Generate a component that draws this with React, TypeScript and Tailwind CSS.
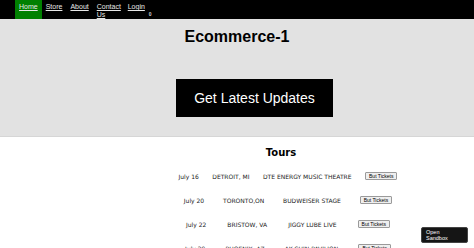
import React from 'react';

const tours = [
  { date: 'July 16', city: 'DETROIT, MI', venue: 'DTE ENERGY MUSIC THEATRE' },
  { date: 'July 20', city: 'TORONTO,ON', venue: 'BUDWEISER STAGE' },
  { date: 'July 22', city: 'BRISTOW, VA', venue: 'JIGGY LUBE LIVE' },
  { date: 'July 29', city: 'PHOENIX, AZ', venue: 'AK-CHIN PAVILION' },
];

function Nav() {
  return (
    <nav className="flex h-[19px] bg-black pl-[15px] text-[7px] leading-[8px] text-[#e8e8e8] [font-family:'Liberation_Sans',sans-serif]">
      <a href="#" className="bg-[#008000] px-[4px] pt-[3px] underline">Home</a>
      <a href="#" className="px-[4px] pt-[3px] underline">Store</a>
      <a href="#" className="px-[4px] pt-[3px] underline">About</a>
      <a href="#" className="w-[31px] px-[4px] pt-[3px] underline">Contact Us</a>
      <a href="#" className="px-[4px] pt-[3px] underline">Login</a>
      <span className="mt-[10px] text-[5px] font-bold text-[#cfcfcf]">0</span>
    </nav>
  );
}

function Header() {
  return (
    <header className="flex h-[118px] flex-col items-center border-b border-[#d6d6d6] bg-[#e2e2e2] pt-[9px] [font-family:'Liberation_Sans',sans-serif]">
      <h1 className="text-[16px] font-bold leading-[18px] text-black">Ecommerce-1</h1>
      <button className="mt-[33px] ml-[35px] h-[38px] w-[157px] bg-black text-[14px] text-white">
        Get Latest Updates
      </button>
    </header>
  );
}

function Tours() {
  return (
    <section className="ml-[165px] w-[246px] pt-[10px] [font-family:'DejaVu_Sans',sans-serif]">
      <h2 className="pr-[14px] text-center text-[10px] font-bold leading-[12px] text-black">Tours</h2>
      <div className="mt-[5px]">
        {tours.map((t) => (
          <div key={t.date} className="flex h-[24px] items-center justify-evenly text-[6px] text-[#222]">
            <span>{t.date}</span>
            <span>{t.city}</span>
            <span>{t.venue}</span>
            <button className="h-[8px] rounded-[1px] border border-[#9a9a9a] bg-[#efefef] px-[3px] text-[5px] leading-[6px] text-black [font-family:'Liberation_Sans',sans-serif]">
              But Tickets
            </button>
          </div>
        ))}
      </div>
    </section>
  );
}

export default function App() {
  return (
    <div className="h-[248px] overflow-hidden bg-white">
      <Nav />
      <Header />
      <Tours />
      <button className="fixed right-[6px] bottom-[5px] h-[16px] w-[47px] rounded-[2px] border border-[#444] bg-[#151515] pl-[4px] text-left text-[5.5px] leading-[6px] text-white [font-family:'Liberation_Sans',sans-serif]">
        Open
        <br />
        Sandbox
      </button>
    </div>
  );
}
